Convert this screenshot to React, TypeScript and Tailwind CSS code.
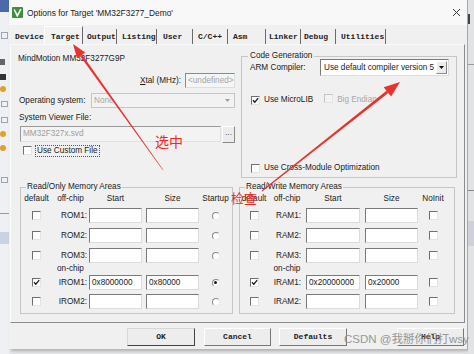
import React from "react";

function Check({ checked = false, disabled = false }: { checked?: boolean; disabled?: boolean }) {
  return (
    <span
      className={`relative inline-block w-[9px] h-[9px] shrink-0 border border-b-[#e4e4e4] border-r-[#e4e4e4] ${
        disabled ? "border-t-[#c4c4c4] border-l-[#c4c4c4] bg-[#f3f3f3]" : "border-t-[#707070] border-l-[#707070] bg-white"
      }`}
    >
      {checked && (
        <svg className="absolute left-0 top-0" width="7" height="7" viewBox="0 0 7 7">
          <path d="M1 3.2 L2.8 5.2 L6.2 1.2" stroke="#1a1a1a" strokeWidth="1.3" fill="none" />
        </svg>
      )}
    </span>
  );
}

function Radio({ on = false }: { on?: boolean }) {
  return (
    <span className="inline-flex items-center justify-center w-[8px] h-[8px] rounded-full border border-t-[#8a8a8a] border-l-[#8a8a8a] border-b-[#ececec] border-r-[#ececec] bg-white">
      {on && <span className="w-[3px] h-[3px] rounded-full bg-[#1a1a1a]" />}
    </span>
  );
}

function Field({ value = "", w }: { value?: string; w: string }) {
  return (
    <div
      className={`${w} h-[15px] shrink-0 border border-t-[#7a7a7a] border-l-[#7a7a7a] border-b-[#dcdcdc] border-r-[#dcdcdc] bg-white pl-[2px] leading-[13px] whitespace-nowrap overflow-hidden`}
    >
      {value}
    </div>
  );
}

function LeftRow({ label, checked = false, start = "", size = "", on = false }: { label: string; checked?: boolean; start?: string; size?: string; on?: boolean }) {
  return (
    <div className="flex items-center h-[15px]">
      <div className="w-[31px] flex justify-center">
        <Check checked={checked} />
      </div>
      <div className="w-[37px] text-right pr-[2px] whitespace-nowrap">{label}</div>
      <Field w="w-[53px]" value={start} />
      <div className="w-[4px]" />
      <Field w="w-[53px]" value={size} />
      <div className="w-[33px] flex justify-center">
        <Radio on={on} />
      </div>
    </div>
  );
}

function RightRow({ label, checked = false, start = "", size = "" }: { label: string; checked?: boolean; start?: string; size?: string }) {
  return (
    <div className="flex items-center h-[15px]">
      <div className="w-[28px] flex justify-center">
        <Check checked={checked} />
      </div>
      <div className="w-[38px] text-right pr-[5px] whitespace-nowrap">{label}</div>
      <Field w="w-[54px]" value={start} />
      <div className="w-[5px]" />
      <Field w="w-[53px]" value={size} />
      <div className="w-[30px] flex justify-center">
        <Check />
      </div>
    </div>
  );
}

const tabs = [
  { t: "Device", w: "w-[34px] pl-[5px]" },
  { t: "Target", w: "w-[39px] pl-[6px]", sel: true },
  { t: "Output", w: "w-[34px] pl-[4px]" },
  { t: "Listing", w: "w-[40px] pl-[5px]" },
  { t: "User", w: "w-[36px] pl-[6px]" },
  { t: "C/C++", w: "w-[35px] pl-[5px]" },
  { t: "Asm", w: "w-[38px] pl-[5px]" },
  { t: "Linker", w: "w-[35px] pl-[3px]" },
  { t: "Debug", w: "w-[35px] pl-[3px]" },
  { t: "Utilities", w: "w-[50px] pl-[5px]" },
];

export default function App() {
  return (
    <div className="relative w-[474px] h-[354px] overflow-hidden bg-[#e6e7e9] flex font-['Liberation_Sans',Arial,sans-serif] text-[8.2px] leading-[10px] text-[#1a1a1a]">
      {/* left IDE strip */}
      <div className="w-[9px] h-full flex flex-col bg-[#eef0f3] shrink-0">
        <div className="h-[12px] bg-[#4a6aa8]" />
        <div className="h-[20px]" />
        <div className="h-[7px] mx-[1px] border border-[#9aa4b4]" />
        <div className="h-[20px]" />
        <div className="h-[6px] w-[5px] bg-[#666]" />
        <div className="h-[9px]" />
        <div className="h-[6px] w-[6px] bg-[#333]" />
        <div className="h-[6px]" />
        <div className="h-[6px] w-[6px] rounded-full bg-[#e0a325]" />
        <div className="h-[9px]" />
        <div className="h-[6px] mx-[1px] border border-[#9aa4b4]" />
        <div className="h-[10px]" />
        <div className="h-[6px] mx-[1px] border border-[#9aa4b4]" />
        <div className="h-[8px]" />
        <div className="h-[6px] w-[6px] rounded-full bg-[#e0a325]" />
        <div className="h-[8px]" />
        <div className="h-[6px] w-[6px] rounded-full bg-[#e0a325]" />
        <div className="h-[26px]" />
        <div className="h-[6px] mx-[1px] border border-[#9aa4b4]" />
        <div className="h-[30px]" />
        <div className="h-[1px] bg-[#999]" />
        <div className="h-[18px]" />
        <div className="h-[12px] bg-[#c9d3e3]" />
      </div>

      {/* dialog */}
      <div className="w-[459px] h-[349px] flex flex-col bg-[#f0f0f0] border-r border-[#a8a8a8] shadow-[2px_2px_3px_rgba(0,0,0,0.25)] shrink-0">
        {/* title bar */}
        <div className="h-[25px] flex items-center bg-[#f8f8f8] pl-[3px]">
          <div className="relative w-[11px] h-[11px] bg-[#3f8f3c] rounded-[1px] flex items-center justify-center">
            <svg width="9" height="9" viewBox="0 0 9 9">
              <path d="M1.2 1.5 L4.3 7.8 L7.8 1.2" stroke="#fff" strokeWidth="1.6" fill="none" />
            </svg>
          </div>
          <div className="ml-[4px] text-[8.4px] leading-[12px] text-[#1b1b1b] whitespace-nowrap">Options for Target 'MM32F3277_Demo'</div>
          <div className="ml-auto mr-[6px] text-[#333]">
            <svg width="9" height="9" viewBox="0 0 9 9">
              <path d="M1 1 L8 8 M8 1 L1 8" stroke="#3a3a3a" strokeWidth="1" />
            </svg>
          </div>
        </div>

        {/* tabs */}
        <div className="h-[19px] flex items-end pl-[1px] font-['Liberation_Mono',monospace] font-bold text-[8px] leading-[10px] text-[#222]">
          {tabs.map((tb) =>
            tb.sel ? (
              <div key={tb.t} className={`${tb.w} h-[18px] border-t border-l border-r border-t-white border-l-white border-r-[#666] bg-[#f2f2f2] pt-[5px]`}>
                {tb.t}
              </div>
            ) : (
              <div key={tb.t} className={`${tb.w} h-[15px] pt-[3px] ${tb.t === "Device" ? "" : "border-r border-[#6a6a6a]"}`}>
                {tb.t}
              </div>
            )
          )}
        </div>

        {/* panel */}
        <div className="ml-[1px] w-[455px] h-[279px] border-l border-t border-l-[#fafafa] border-t-[#fafafa] border-r border-b border-r-[#8c8c8c] border-b-[#8c8c8c] pt-[6px] pl-[7px] flex flex-col">
          {/* top section */}
          <div className="flex">
            <div className="w-[217px] flex flex-col">
              <div className="mt-[2px] h-[12px] leading-[12px]">MindMotion MM32F3277G9P</div>
              <div className="mt-[8px] h-[15px] flex items-center justify-end">
                <span className="whitespace-nowrap">
                  <span className="underline">X</span>tal (MHz):
                </span>
                <div className="ml-[4px] w-[50px] h-[15px] border border-t-[#8a8a8a] border-l-[#8a8a8a] border-b-[#dedede] border-r-[#dedede] bg-[#f5f5f5] text-[#a4a4a4] pl-[2px] leading-[13px] whitespace-nowrap overflow-hidden">
                  &lt;undefined&gt;
                </div>
              </div>
              <div className="mt-[5px] h-[15px] flex items-center pl-[1px]">
                <span className="whitespace-nowrap">Operating system:</span>
                <div className="ml-auto w-[144px] h-[15px] border border-[#c6c6c6] bg-[#f2f2f2] flex items-center text-[#a8a8a8] pl-[2px]">
                  None
                  <span className="ml-auto mr-[1px] w-[11px] h-[11px] flex items-center justify-center">
                    <svg width="5" height="3" viewBox="0 0 5 3">
                      <path d="M0 0 L5 0 L2.5 3 Z" fill="#a0a0a0" />
                    </svg>
                  </span>
                </div>
              </div>
              <div className="mt-[5px] h-[10px] pl-[1px]">System Viewer File:</div>
              <div className="mt-[3px] h-[16px] flex pl-[2px]">
                <div className="w-[201px] h-[16px] border border-t-[#9a9a9a] border-l-[#9a9a9a] border-b-[#e0e0e0] border-r-[#e0e0e0] bg-[#f3f3f3] text-[#a0a0a0] pl-[2px] leading-[14px]">
                  MM32F327x.svd
                </div>
                <div className="ml-[1px] w-[13px] h-[17px] border border-t-white border-l-white border-b-[#8a8a8a] border-r-[#8a8a8a] bg-[#ececec] text-[#555] text-center leading-[12px]">
                  ...
                </div>
              </div>
              <div className="mt-[3px] h-[11px] flex items-center pl-[5px]">
                <Check />
                <span className="ml-[3px] px-[1px] border border-dotted border-[#555] leading-[10px] whitespace-nowrap">Use Custom File</span>
              </div>
            </div>

            <fieldset className="ml-[6px] w-[216px] h-[127px] border border-[#c6c6c6] px-[8px]">
              <legend className="ml-[-2px] px-[2px] leading-[10px]">Code Generation</legend>
              <div className="flex items-center h-[17px] -mt-[2px]">
                <span className="whitespace-nowrap">ARM Compiler:</span>
                <div className="ml-auto -mr-[1px] w-[129px] h-[17px] border border-t-[#7a7a7a] border-l-[#7a7a7a] border-b-[#dcdcdc] border-r-[#dcdcdc] bg-white flex items-center pl-[3px] whitespace-nowrap">
                  Use default compiler version 5
                  <span className="ml-auto mr-[1px] w-[11px] h-[13px] border border-t-white border-l-white border-b-[#888] border-r-[#888] bg-[#ececec] flex items-center justify-center">
                    <svg width="5" height="3" viewBox="0 0 5 3">
                      <path d="M0 0 L5 0 L2.5 3 Z" fill="#111" />
                    </svg>
                  </span>
                </div>
              </div>
              <div className="mt-[19px] h-[10px] flex items-center pl-[1px] whitespace-nowrap">
                <Check checked />
                <span className="ml-[4px]">Use MicroLIB</span>
                <span className="ml-[11px]">
                  <Check disabled />
                </span>
                <span className="ml-[4px] text-[#a8a8a8]">Big Endian</span>
              </div>
              <div className="mt-[58px] h-[10px] flex items-center pl-[1px] whitespace-nowrap">
                <Check />
                <span className="ml-[4px]">Use Cross-Module Optimization</span>
              </div>
            </fieldset>
          </div>

          {/* bottom section */}
          <div className="flex mt-[4px]">
            <fieldset className="ml-[2px] w-[213px] h-[132px] border border-[#c6c6c6]">
              <legend className="ml-[5px] px-[1px] leading-[10px]">Read/Only Memory Areas</legend>
              <div className="flex h-[10px] mt-[2px] whitespace-nowrap">
                <div className="w-[31px] text-center">default</div>
                <div className="w-[37px] text-center">off-chip</div>
                <div className="w-[53px] text-center">Start</div>
                <div className="w-[4px]" />
                <div className="w-[53px] text-center">Size</div>
                <div className="w-[33px] text-center">Startup</div>
              </div>
              <div className="mt-[4px]">
                <LeftRow label="ROM1:" />
              </div>
              <div className="mt-[5px]">
                <LeftRow label="ROM2:" />
              </div>
              <div className="mt-[5px]">
                <LeftRow label="ROM3:" />
              </div>
              <div className="flex h-[10px] mt-[1px]">
                <div className="w-[31px]" />
                <div className="w-[37px] text-center">on-chip</div>
              </div>
              <div className="mt-[1px]">
                <LeftRow label="IROM1:" checked start="0x8000000" size="0x80000" on />
              </div>
              <div className="mt-[4px]">
                <LeftRow label="IROM2:" />
              </div>
            </fieldset>

            <fieldset className="ml-[6px] w-[216px] h-[132px] border border-[#c6c6c6]">
              <legend className="ml-[5px] px-[1px] leading-[10px]">Read/Write Memory Areas</legend>
              <div className="flex h-[10px] mt-[2px] whitespace-nowrap">
                <div className="w-[28px] text-center">default</div>
                <div className="w-[38px] text-center">off-chip</div>
                <div className="w-[54px] text-center">Start</div>
                <div className="w-[5px]" />
                <div className="w-[53px] text-center">Size</div>
                <div className="w-[30px] text-center">NoInit</div>
              </div>
              <div className="mt-[4px]">
                <RightRow label="RAM1:" />
              </div>
              <div className="mt-[5px]">
                <RightRow label="RAM2:" />
              </div>
              <div className="mt-[5px]">
                <RightRow label="RAM3:" />
              </div>
              <div className="flex h-[10px] mt-[1px]">
                <div className="w-[28px]" />
                <div className="w-[38px] text-center">on-chip</div>
              </div>
              <div className="mt-[1px]">
                <RightRow label="IRAM1:" checked start="0x20000000" size="0x20000" />
              </div>
              <div className="mt-[4px]">
                <RightRow label="IRAM2:" />
              </div>
            </fieldset>
          </div>
        </div>

        {/* buttons */}
        <div className="mt-[5px] h-[18px] flex font-['Liberation_Mono',monospace] font-bold text-[8px] text-[#222]">
          <div className="ml-[118px] w-[68px] h-[18px] border border-t-[#d8d8d8] border-l-[#d8d8d8] border-b-[#444] border-r-[#444] bg-[#ededed] flex items-center justify-center">
            OK
          </div>
          <div className="ml-[9px] w-[67px] h-[18px] border border-t-white border-l-white border-b-[#777] border-r-[#777] bg-[#ededed] flex items-center justify-center">
            Cancel
          </div>
          <div className="ml-[8px] w-[68px] h-[18px] border border-t-white border-l-white border-b-[#777] border-r-[#777] bg-[#ededed] flex items-center justify-center">
            Defaults
          </div>
          <div className="ml-[50px] w-[67px] h-[18px] border border-t-white border-l-white border-b-[#777] border-r-[#777] bg-[#ededed] flex items-center justify-center">
            Help
          </div>
        </div>
      </div>

      {/* right background strip */}
      <div className="flex-1 h-full flex flex-col bg-[#e2e3e5]">
        <div className="h-[14px]" />
        <div className="h-[10px] w-[2px] bg-[#444]" />
        <div className="h-[40px]" />
        <div className="h-[1px] bg-[#999]" />
        <div className="h-[125px]" />
        <div className="h-[1px] bg-[#888]" />
        <div className="h-[30px]" />
        <div className="h-[25px] bg-[#cfd1d6]" />
      </div>

      {/* annotations */}
      <svg className="absolute left-0 top-0 pointer-events-none" width="474" height="354" viewBox="0 0 474 354">
        <polygon points="163.5,170.3 162.5,169.7 80.2,56.2 82.2,54.8" fill="#e8322d" />
        <polygon points="73,44 85.2,52.5 77,58.3" fill="#e8322d" />
        <polygon points="262.3,191.6 261.7,190.6 386.5,90.8 388.3,93" fill="#e8322d" />
        <polygon points="400,82 391.1,96.6 383.7,87.2" fill="#e8322d" />
      </svg>
      <div className="absolute left-[155px] top-[133px] text-[14px] leading-[16px] text-[#ee2a24] font-['Noto_Sans_CJK_SC',sans-serif]">
        选中
      </div>
      <div className="absolute left-[231px] top-[190px] text-[13px] leading-[15px] text-[#ee2a24] font-['Noto_Sans_CJK_SC',sans-serif]">
        检查
      </div>
      <div className="absolute left-[344px] top-[332px] text-[11.5px] leading-[14px] text-[#8e8e8e] opacity-90 font-['Liberation_Sans','Noto_Sans_CJK_SC',sans-serif]">
        CSDN @我掰你们打wsy
      </div>
    </div>
  );
}
